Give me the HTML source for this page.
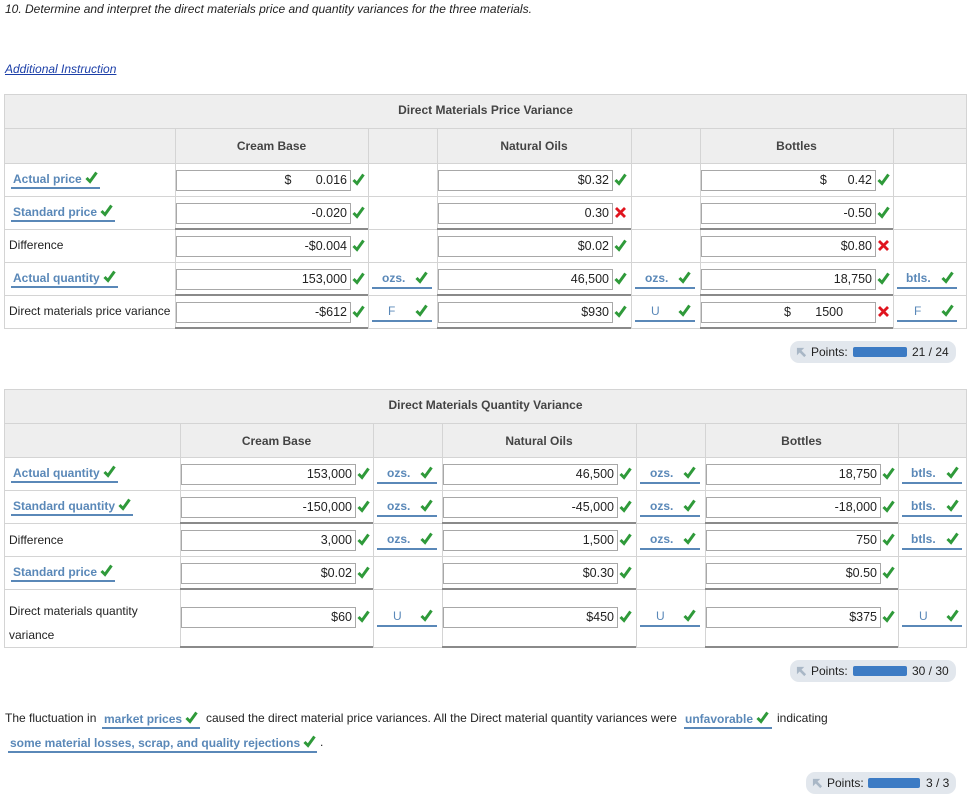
<!DOCTYPE html>
<html><head><meta charset="utf-8"><style>
*{margin:0;padding:0;box-sizing:border-box}
body{width:971px;height:794px;position:relative;background:#fff;font-family:"Liberation Sans",Arial,sans-serif;font-size:12px;color:#222;overflow:hidden}
.a{position:absolute}
.hl{position:absolute;height:1px;background:#d4d4d4}
.vl{position:absolute;width:1px;background:#d4d4d4}
.th{position:absolute;height:2px;background:#8a8a8a}
.in{position:absolute;height:21px;border:1px solid #a8a8a8;background:#fff;text-align:right;padding-right:3px;line-height:19px;font-size:12.5px;white-space:pre;color:#222}
.ck{position:absolute;width:13px;height:13px}
.lb{position:absolute;font-weight:bold;color:#5a88b8;font-size:12px;border-bottom:2px solid #5a88b8;padding:0 2px 1px 2px;white-space:nowrap;height:19px;line-height:16px}
.un{position:absolute;font-weight:bold;color:#5a88b8;font-size:12px;border-bottom:2px solid #5a88b8;height:19px;line-height:16px}
.tx{position:absolute;white-space:nowrap}
.gh{position:absolute;background:#eeeeee}
.ctr{position:absolute;text-align:center;color:#444}
.pt{position:absolute;height:22px;background:#e2e7ed;border-radius:9px;font-size:12px;color:#222;line-height:22px}
.bar{position:absolute;top:6px;height:10px;background:#3c7bc4;border-radius:2px}
</style></head><body>
<svg width="0" height="0" style="position:absolute"><defs>
<symbol id="c" viewBox="0 0 13 13"><path d="M1.5 7 L5 10.5 L11.5 1.5" fill="none" stroke="#2f9a3a" stroke-width="3"/></symbol>
<symbol id="x" viewBox="0 0 13 13"><path d="M2 2 L11 11 M11 2 L2 11" fill="none" stroke="#e0141e" stroke-width="2.8"/></symbol>
<symbol id="p" viewBox="0 0 12 12"><path d="M1 1 H9 L6 4 L11 9 L9 11 L4 6 L1 9 Z" fill="#a9b7c6"/></symbol>
</defs></svg>

<div class="tx" style="left:5px;top:2px;font-style:italic;font-size:12px;color:#222">10. Determine and interpret the direct materials price and quantity variances for the three materials.</div>
<div class="tx" style="left:5px;top:62px;font-style:italic;font-size:12px;color:#1c3fa8;text-decoration:underline">Additional Instruction</div>

<!-- TABLE 1 -->
<div class="a" style="left:4px;top:94px;width:963px;height:235px;border:1px solid #d4d4d4"></div>
<div class="gh" style="left:5px;top:95px;width:961px;height:68px"></div>
<div class="hl" style="left:5px;top:128px;width:961px"></div>
<div class="ctr" style="left:4px;top:103px;width:963px;font-weight:bold">Direct Materials Price Variance</div>
<div class="vl" style="left:175px;top:128px;height:200px"></div>
<div class="vl" style="left:368px;top:128px;height:200px"></div>
<div class="vl" style="left:437px;top:128px;height:200px"></div>
<div class="vl" style="left:631px;top:128px;height:200px"></div>
<div class="vl" style="left:700px;top:128px;height:200px"></div>
<div class="vl" style="left:893px;top:128px;height:200px"></div>
<div class="ctr" style="left:175px;top:139px;width:193px;font-weight:bold">Cream Base</div>
<div class="ctr" style="left:437px;top:139px;width:194px;font-weight:bold">Natural Oils</div>
<div class="ctr" style="left:700px;top:139px;width:193px;font-weight:bold">Bottles</div>
<div class="hl" style="left:5px;top:163px;width:961px"></div>
<div class="hl" style="left:5px;top:196px;width:961px"></div>
<div class="hl" style="left:5px;top:229px;width:961px"></div>
<div class="hl" style="left:5px;top:262px;width:961px"></div>
<div class="hl" style="left:5px;top:295px;width:961px"></div>
<div class="th" style="left:175px;top:228px;width:193px"></div><div class="th" style="left:437px;top:228px;width:194px"></div><div class="th" style="left:700px;top:228px;width:193px"></div>
<div class="th" style="left:175px;top:294px;width:193px"></div><div class="th" style="left:437px;top:294px;width:194px"></div><div class="th" style="left:700px;top:294px;width:193px"></div>
<div class="th" style="left:175px;top:327px;width:193px"></div><div class="th" style="left:437px;top:327px;width:194px"></div><div class="th" style="left:700px;top:327px;width:193px"></div>

<div class="lb" style="left:11px;top:170px">Actual price <svg class="ck" style="position:relative;top:1px"><use href="#c"/></svg></div>
<div class="lb" style="left:11px;top:203px">Standard price <svg class="ck" style="position:relative;top:1px"><use href="#c"/></svg></div>
<div class="tx" style="left:9px;top:238px">Difference</div>
<div class="lb" style="left:11px;top:269px">Actual quantity <svg class="ck" style="position:relative;top:1px"><use href="#c"/></svg></div>
<div class="tx" style="left:9px;top:304px">Direct materials price variance</div>

<div class="in" style="left:176px;top:170px;width:175px">$       0.016</div><svg class="ck" style="left:352px;top:173px"><use href="#c"/></svg>
<div class="in" style="left:176px;top:203px;width:175px">-0.020</div><svg class="ck" style="left:352px;top:206px"><use href="#c"/></svg>
<div class="in" style="left:176px;top:236px;width:175px">-$0.004</div><svg class="ck" style="left:352px;top:239px"><use href="#c"/></svg>
<div class="in" style="left:176px;top:269px;width:175px">153,000</div><svg class="ck" style="left:352px;top:272px"><use href="#c"/></svg>
<div class="in" style="left:176px;top:302px;width:175px">-$612</div><svg class="ck" style="left:352px;top:305px"><use href="#c"/></svg>

<div class="in" style="left:438px;top:170px;width:175px">$0.32</div><svg class="ck" style="left:614px;top:173px"><use href="#c"/></svg>
<div class="in" style="left:438px;top:203px;width:175px">0.30</div><svg class="ck" style="left:614px;top:206px"><use href="#x"/></svg>
<div class="in" style="left:438px;top:236px;width:175px">$0.02</div><svg class="ck" style="left:614px;top:239px"><use href="#c"/></svg>
<div class="in" style="left:438px;top:269px;width:175px">46,500</div><svg class="ck" style="left:614px;top:272px"><use href="#c"/></svg>
<div class="in" style="left:438px;top:302px;width:175px">$930</div><svg class="ck" style="left:614px;top:305px"><use href="#c"/></svg>

<div class="in" style="left:701px;top:170px;width:175px">$      0.42</div><svg class="ck" style="left:877px;top:173px"><use href="#c"/></svg>
<div class="in" style="left:701px;top:203px;width:175px">-0.50</div><svg class="ck" style="left:877px;top:206px"><use href="#c"/></svg>
<div class="in" style="left:701px;top:236px;width:175px">$0.80</div><svg class="ck" style="left:877px;top:239px"><use href="#x"/></svg>
<div class="in" style="left:701px;top:302px;width:175px;text-align:left;padding-left:82px">$       1500</div><svg class="ck" style="left:877px;top:305px"><use href="#x"/></svg>
<div class="in" style="left:701px;top:269px;width:175px">18,750</div><svg class="ck" style="left:877px;top:272px"><use href="#c"/></svg>

<div class="un" style="left:372px;top:270px;width:60px"><span style="margin-left:10px">ozs.</span><svg class="ck" style="position:absolute;left:43px;top:1px"><use href="#c"/></svg></div>
<div class="un" style="left:372px;top:303px;width:60px;font-weight:normal"><span style="margin-left:16px">F</span><svg class="ck" style="position:absolute;left:43px;top:1px"><use href="#c"/></svg></div>
<div class="un" style="left:635px;top:270px;width:60px"><span style="margin-left:10px">ozs.</span><svg class="ck" style="position:absolute;left:43px;top:1px"><use href="#c"/></svg></div>
<div class="un" style="left:635px;top:303px;width:60px;font-weight:normal"><span style="margin-left:16px">U</span><svg class="ck" style="position:absolute;left:43px;top:1px"><use href="#c"/></svg></div>
<div class="un" style="left:897px;top:270px;width:60px"><span style="margin-left:9px">btls.</span><svg class="ck" style="position:absolute;left:44px;top:1px"><use href="#c"/></svg></div>
<div class="un" style="left:897px;top:303px;width:60px;font-weight:normal"><span style="margin-left:17px">F</span><svg class="ck" style="position:absolute;left:44px;top:1px"><use href="#c"/></svg></div>

<div class="pt" style="left:790px;top:341px;width:166px"><svg style="position:absolute;left:6px;top:6px;width:11px;height:11px"><use href="#p"/></svg><span style="position:absolute;left:21px">Points:</span><div class="bar" style="left:63px;width:54px"></div><span style="position:absolute;left:122px">21 / 24</span></div>

<!-- TABLE 2 -->
<div class="a" style="left:4px;top:389px;width:963px;height:259px;border:1px solid #d4d4d4"></div>
<div class="gh" style="left:5px;top:390px;width:961px;height:67px"></div>
<div class="hl" style="left:5px;top:423px;width:961px"></div>
<div class="ctr" style="left:4px;top:398px;width:963px;font-weight:bold">Direct Materials Quantity Variance</div>
<div class="vl" style="left:180px;top:423px;height:224px"></div>
<div class="vl" style="left:373px;top:423px;height:224px"></div>
<div class="vl" style="left:442px;top:423px;height:224px"></div>
<div class="vl" style="left:636px;top:423px;height:224px"></div>
<div class="vl" style="left:705px;top:423px;height:224px"></div>
<div class="vl" style="left:898px;top:423px;height:224px"></div>
<div class="ctr" style="left:180px;top:434px;width:193px;font-weight:bold">Cream Base</div>
<div class="ctr" style="left:442px;top:434px;width:194px;font-weight:bold">Natural Oils</div>
<div class="ctr" style="left:705px;top:434px;width:193px;font-weight:bold">Bottles</div>
<div class="hl" style="left:5px;top:457px;width:961px"></div>
<div class="hl" style="left:5px;top:490px;width:961px"></div>
<div class="hl" style="left:5px;top:523px;width:961px"></div>
<div class="hl" style="left:5px;top:556px;width:961px"></div>
<div class="hl" style="left:5px;top:589px;width:961px"></div>
<div class="th" style="left:180px;top:522px;width:193px"></div><div class="th" style="left:442px;top:522px;width:194px"></div><div class="th" style="left:705px;top:522px;width:193px"></div>
<div class="th" style="left:180px;top:588px;width:193px"></div><div class="th" style="left:442px;top:588px;width:194px"></div><div class="th" style="left:705px;top:588px;width:193px"></div>
<div class="th" style="left:180px;top:646px;width:193px"></div><div class="th" style="left:442px;top:646px;width:194px"></div><div class="th" style="left:705px;top:646px;width:193px"></div>

<div class="lb" style="left:11px;top:464px">Actual quantity <svg class="ck" style="position:relative;top:1px"><use href="#c"/></svg></div>
<div class="lb" style="left:11px;top:497px">Standard quantity <svg class="ck" style="position:relative;top:1px"><use href="#c"/></svg></div>
<div class="tx" style="left:9px;top:533px">Difference</div>
<div class="lb" style="left:11px;top:563px">Standard price <svg class="ck" style="position:relative;top:1px"><use href="#c"/></svg></div>
<div class="tx" style="left:9px;top:599px;line-height:24px;white-space:normal;width:150px">Direct materials quantity variance</div>

<div class="in" style="left:181px;top:464px;width:175px">153,000</div><svg class="ck" style="left:357px;top:467px"><use href="#c"/></svg>
<div class="in" style="left:181px;top:497px;width:175px">-150,000</div><svg class="ck" style="left:357px;top:500px"><use href="#c"/></svg>
<div class="in" style="left:181px;top:530px;width:175px">3,000</div><svg class="ck" style="left:357px;top:533px"><use href="#c"/></svg>
<div class="in" style="left:181px;top:563px;width:175px">$0.02</div><svg class="ck" style="left:357px;top:566px"><use href="#c"/></svg>
<div class="in" style="left:181px;top:607px;width:175px">$60</div><svg class="ck" style="left:357px;top:610px"><use href="#c"/></svg>

<div class="in" style="left:443px;top:464px;width:175px">46,500</div><svg class="ck" style="left:619px;top:467px"><use href="#c"/></svg>
<div class="in" style="left:443px;top:497px;width:175px">-45,000</div><svg class="ck" style="left:619px;top:500px"><use href="#c"/></svg>
<div class="in" style="left:443px;top:530px;width:175px">1,500</div><svg class="ck" style="left:619px;top:533px"><use href="#c"/></svg>
<div class="in" style="left:443px;top:563px;width:175px">$0.30</div><svg class="ck" style="left:619px;top:566px"><use href="#c"/></svg>
<div class="in" style="left:443px;top:607px;width:175px">$450</div><svg class="ck" style="left:619px;top:610px"><use href="#c"/></svg>

<div class="in" style="left:706px;top:464px;width:175px">18,750</div><svg class="ck" style="left:882px;top:467px"><use href="#c"/></svg>
<div class="in" style="left:706px;top:497px;width:175px">-18,000</div><svg class="ck" style="left:882px;top:500px"><use href="#c"/></svg>
<div class="in" style="left:706px;top:530px;width:175px">750</div><svg class="ck" style="left:882px;top:533px"><use href="#c"/></svg>
<div class="in" style="left:706px;top:563px;width:175px">$0.50</div><svg class="ck" style="left:882px;top:566px"><use href="#c"/></svg>
<div class="in" style="left:706px;top:607px;width:175px">$375</div><svg class="ck" style="left:882px;top:610px"><use href="#c"/></svg>

<div class="un" style="left:377px;top:465px;width:60px"><span style="margin-left:10px">ozs.</span><svg class="ck" style="position:absolute;left:43px;top:1px"><use href="#c"/></svg></div>
<div class="un" style="left:377px;top:498px;width:60px"><span style="margin-left:10px">ozs.</span><svg class="ck" style="position:absolute;left:43px;top:1px"><use href="#c"/></svg></div>
<div class="un" style="left:377px;top:531px;width:60px"><span style="margin-left:10px">ozs.</span><svg class="ck" style="position:absolute;left:43px;top:1px"><use href="#c"/></svg></div>
<div class="un" style="left:377px;top:608px;width:60px;font-weight:normal"><span style="margin-left:16px">U</span><svg class="ck" style="position:absolute;left:43px;top:1px"><use href="#c"/></svg></div>
<div class="un" style="left:640px;top:465px;width:60px"><span style="margin-left:10px">ozs.</span><svg class="ck" style="position:absolute;left:43px;top:1px"><use href="#c"/></svg></div>
<div class="un" style="left:640px;top:498px;width:60px"><span style="margin-left:10px">ozs.</span><svg class="ck" style="position:absolute;left:43px;top:1px"><use href="#c"/></svg></div>
<div class="un" style="left:640px;top:531px;width:60px"><span style="margin-left:10px">ozs.</span><svg class="ck" style="position:absolute;left:43px;top:1px"><use href="#c"/></svg></div>
<div class="un" style="left:640px;top:608px;width:60px;font-weight:normal"><span style="margin-left:16px">U</span><svg class="ck" style="position:absolute;left:43px;top:1px"><use href="#c"/></svg></div>
<div class="un" style="left:902px;top:465px;width:60px"><span style="margin-left:9px">btls.</span><svg class="ck" style="position:absolute;left:44px;top:1px"><use href="#c"/></svg></div>
<div class="un" style="left:902px;top:498px;width:60px"><span style="margin-left:9px">btls.</span><svg class="ck" style="position:absolute;left:44px;top:1px"><use href="#c"/></svg></div>
<div class="un" style="left:902px;top:531px;width:60px"><span style="margin-left:9px">btls.</span><svg class="ck" style="position:absolute;left:44px;top:1px"><use href="#c"/></svg></div>
<div class="un" style="left:902px;top:608px;width:60px;font-weight:normal"><span style="margin-left:17px">U</span><svg class="ck" style="position:absolute;left:44px;top:1px"><use href="#c"/></svg></div>

<div class="pt" style="left:790px;top:660px;width:166px"><svg style="position:absolute;left:6px;top:6px;width:11px;height:11px"><use href="#p"/></svg><span style="position:absolute;left:21px">Points:</span><div class="bar" style="left:63px;width:54px"></div><span style="position:absolute;left:122px">30 / 30</span></div>

<!-- Bottom text -->
<div class="tx" style="left:5px;top:711px">The fluctuation in</div>
<div class="lb" style="left:102px;top:710px;width:98px;padding-left:2px">market prices <svg class="ck" style="position:relative;top:1px"><use href="#c"/></svg></div>
<div class="tx" style="left:206px;top:711px">caused the direct material price variances. All the Direct material quantity variances were</div>
<div class="lb" style="left:684px;top:710px;width:88px;padding-left:1px">unfavorable <svg class="ck" style="position:relative;top:1px"><use href="#c"/></svg></div>
<div class="tx" style="left:777px;top:711px">indicating</div>
<div class="lb" style="left:8px;top:734px;width:309px">some material losses, scrap, and quality rejections <svg class="ck" style="position:relative;top:1px"><use href="#c"/></svg></div>
<div class="tx" style="left:320px;top:735px">.</div>

<div class="pt" style="left:806px;top:772px;width:150px"><svg style="position:absolute;left:6px;top:6px;width:11px;height:11px"><use href="#p"/></svg><span style="position:absolute;left:21px">Points:</span><div class="bar" style="left:62px;width:52px"></div><span style="position:absolute;left:120px">3 / 3</span></div>
</body></html>
